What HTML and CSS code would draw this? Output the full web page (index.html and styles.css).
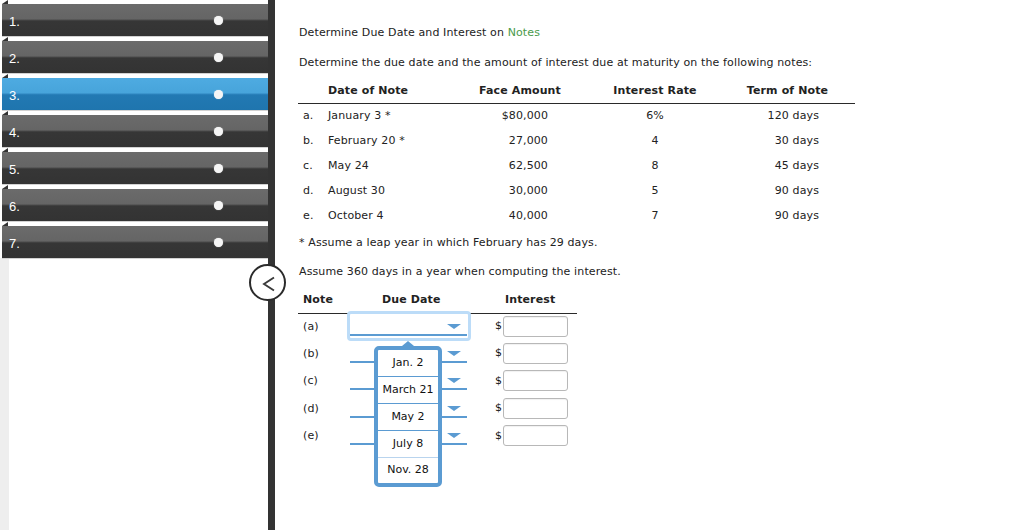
FILE: index.html
```html
<!DOCTYPE html>
<html lang="en">
<head>
<meta charset="utf-8">
<title>Determine Due Date and Interest on Notes</title>
<link rel="stylesheet" href="styles.css">
</head>
<body>
<div class="page">
  <aside class="sidebar">
    <div class="side-col">
      <ul class="steps">
        <li class="step"><span class="num">1.</span><span class="dot"></span></li>
        <li class="step"><span class="num">2.</span><span class="dot"></span></li>
        <li class="step active"><span class="num">3.</span><span class="dot"></span></li>
        <li class="step"><span class="num">4.</span><span class="dot"></span></li>
        <li class="step"><span class="num">5.</span><span class="dot"></span></li>
        <li class="step"><span class="num">6.</span><span class="dot"></span></li>
        <li class="step"><span class="num">7.</span><span class="dot"></span></li>
      </ul>
      <div class="side-fill"></div>
    </div>
    <div class="side-bar"></div>
    <button class="collapse" type="button" aria-label="Collapse">
      <svg width="14" height="16" viewBox="0 0 14 16"><polyline points="12,1.5 2,8 12,14.5" fill="none" stroke="#3a3a3a" stroke-width="1.9" stroke-linejoin="miter"/></svg>
    </button>
  </aside>

  <main class="content">
    <p class="title">Determine Due Date and Interest on <a class="link">Notes</a></p>
    <p class="intro">Determine the due date and the amount of interest due at maturity on the following notes:</p>

    <table class="notes">
      <colgroup>
        <col class="c-letter"><col class="c-date"><col class="c-face"><col class="c-rate"><col class="c-term">
      </colgroup>
      <thead>
        <tr>
          <th></th>
          <th class="h-date">Date of Note</th>
          <th>Face Amount</th>
          <th>Interest Rate</th>
          <th>Term of Note</th>
        </tr>
      </thead>
      <tbody>
        <tr><td class="letter">a.</td><td class="date">January 3 *</td><td class="face">$80,000</td><td class="rate">6%</td><td class="term">120 days</td></tr>
        <tr><td class="letter">b.</td><td class="date">February 20 *</td><td class="face">27,000</td><td class="rate">4</td><td class="term">30 days</td></tr>
        <tr><td class="letter">c.</td><td class="date">May 24</td><td class="face">62,500</td><td class="rate">8</td><td class="term">45 days</td></tr>
        <tr><td class="letter">d.</td><td class="date">August 30</td><td class="face">30,000</td><td class="rate">5</td><td class="term">90 days</td></tr>
        <tr><td class="letter">e.</td><td class="date">October 4</td><td class="face">40,000</td><td class="rate">7</td><td class="term">90 days</td></tr>
      </tbody>
    </table>

    <p class="footnote">* Assume a leap year in which February has 29 days.</p>
    <p class="assume">Assume 360 days in a year when computing the interest.</p>

    <table class="answers">
      <colgroup>
        <col class="a-note"><col class="a-due"><col class="a-int">
      </colgroup>
      <thead>
        <tr>
          <th class="h-note">Note</th>
          <th class="h-due">Due Date</th>
          <th class="h-int">Interest</th>
        </tr>
      </thead>
      <tbody>
        <tr>
          <td class="note">(a)</td>
          <td>
            <div class="select focus">
              <span class="caret-down"></span>
              <div class="popup">
                <div class="opt">Jan. 2</div>
                <div class="opt">March 21</div>
                <div class="opt">May 2</div>
                <div class="opt soft">July 8</div>
                <div class="opt">Nov. 28</div>
              </div>
            </div>
          </td>
          <td><div class="amt"><span class="cur">$</span><input class="box" type="text"></div></td>
        </tr>
        <tr>
          <td class="note">(b)</td>
          <td><div class="select"><span class="caret-down"></span></div></td>
          <td><div class="amt"><span class="cur">$</span><input class="box" type="text"></div></td>
        </tr>
        <tr>
          <td class="note">(c)</td>
          <td><div class="select"><span class="caret-down"></span></div></td>
          <td><div class="amt"><span class="cur">$</span><input class="box" type="text"></div></td>
        </tr>
        <tr>
          <td class="note">(d)</td>
          <td><div class="select"><span class="caret-down"></span></div></td>
          <td><div class="amt"><span class="cur">$</span><input class="box" type="text"></div></td>
        </tr>
        <tr>
          <td class="note">(e)</td>
          <td><div class="select"><span class="caret-down"></span></div></td>
          <td><div class="amt"><span class="cur">$</span><input class="box" type="text"></div></td>
        </tr>
      </tbody>
    </table>
  </main>
</div>
</body>
</html>
```

FILE: styles.css
```css
* { box-sizing: border-box; }

html, body {
  margin: 0;
  padding: 0;
  background: #fff;
}

body {
  font-family: "DejaVu Sans", Verdana, sans-serif;
  font-size: 11px;
  line-height: 14px;
  letter-spacing: 0.12px;
  color: #222;
}

.page {
  display: flex;
  height: 530px;
  overflow: hidden;
}

/* ---------- sidebar ---------- */
.sidebar {
  position: relative;
  display: flex;
  flex: none;
  width: 275px;
}

.side-col {
  width: 268px;
  display: flex;
  flex-direction: column;
}

.steps {
  list-style: none;
  margin: 0;
  padding: 4px 0 0 0;
  display: flex;
  flex-direction: column;
  gap: 5px;
}

.step {
  position: relative;
  height: 32px;
  margin-left: 2px;
  display: flex;
  align-items: center;
  padding-left: 7px;
  color: #fff;
  font-family: "Liberation Sans", Arial, sans-serif;
  font-size: 13px;
  line-height: 15px;
  letter-spacing: 0;
  background: linear-gradient(#6b6b6b 0, #656565 15px, #4a4a4a 16px, #363636 17px, #333 32px);
  box-shadow: 0 1px 0 #d2d2d2;
}

.step::before {
  content: "";
  position: absolute;
  left: 0;
  top: -4px;
  width: 0;
  height: 0;
  border-left: 6px solid transparent;
  border-bottom: 4px solid #333;
}

.step.active {
  background: linear-gradient(#4eabe1 0, #47a4db 15px, #2f86c0 16px, #2279b3 17px, #1f75ae 32px);
}

.num {
  padding-top: 3px;
}

.dot {
  margin-left: auto;
  margin-right: 45px;
  width: 9px;
  height: 9px;
  border-radius: 50%;
  background: #f5f5f5;
  box-shadow: 0 0 1px rgba(255, 255, 255, 0.8);
}

.side-fill {
  flex: 1;
  border-left: 9px solid #eeeeee;
}

.side-bar {
  width: 7px;
  background: #333;
}

.collapse {
  position: absolute;
  left: 249px;
  top: 264px;
  width: 37px;
  height: 37px;
  padding: 0;
  border: 2px solid #2b2b2b;
  border-radius: 50%;
  background: #fff;
  display: flex;
  align-items: center;
  justify-content: center;
}

.collapse svg {
  display: block;
  margin-left: 2px;
  margin-top: 2px;
}

/* ---------- content ---------- */
.content {
  flex: 1;
  padding: 26px 0 0 24px;
}

.content p {
  margin: 0;
}

.intro { margin-top: 16px !important; }
.footnote { margin-top: 8px !important; }
.assume { margin-top: 15px !important; }

.link {
  color: #4a9a4a;
  text-decoration: none;
}

table {
  border-collapse: collapse;
  table-layout: fixed;
}

th, td {
  padding: 0;
  font-weight: normal;
}

th {
  font-weight: bold;
  border-bottom: 1px solid #2a2a2a;
}

/* notes table */
.notes {
  width: 557px;
  margin: 9px 0 0 -1px;
}

.c-letter { width: 27px; }
.c-date { width: 125px; }
.c-face { width: 140px; }
.c-rate { width: 130px; }
.c-term { width: 135px; }

.notes th {
  height: 24px;
  text-align: center;
  vertical-align: middle;
}

.notes th.h-date {
  text-align: left;
  padding-left: 3px;
}

.notes td {
  height: 25px;
  vertical-align: middle;
}

.letter { padding-left: 5px !important; }
.date { padding-left: 3px !important; }
.face { text-align: right; padding-right: 42px !important; }
.rate { text-align: center; }
.term { text-align: right; padding-right: 36px !important; }

/* answers table */
.answers {
  width: 279px;
  margin: 9px 0 0 -1px;
}

.a-note { width: 49px; }
.a-due { width: 125px; }
.a-int { width: 105px; }

.answers th {
  height: 25px;
  vertical-align: middle;
  text-align: left;
}

.h-note { padding-left: 5px !important; }
.h-due { padding-left: 35px !important; }
.h-int { padding-left: 33px !important; }

.answers td {
  height: 27.5px;
  vertical-align: top;
}

.note {
  padding: 6px 0 0 5px !important;
}

.select {
  position: relative;
  margin-left: 3px;
  width: 117px;
  height: 22px;
  border-bottom: 2px solid #5b9bd2;
  display: flex;
  justify-content: flex-end;
  align-items: flex-start;
  padding: 10px 6px 0 0;
}

.select.focus::after {
  content: "";
  position: absolute;
  top: -3px;
  left: -3px;
  right: -4px;
  bottom: -7px;
  border: 3px solid #bcdcf8;
  border-radius: 4px;
}

.caret-down {
  width: 0;
  height: 0;
  border-left: 7px solid transparent;
  border-right: 7px solid transparent;
  border-top: 5px solid #5b9bd2;
}

.popup {
  position: absolute;
  left: 24px;
  top: 32px;
  width: 68px;
  border: 4px solid #5b9bd2;
  border-radius: 5px;
  background: #fff;
  z-index: 5;
}

.popup::before {
  content: "";
  position: absolute;
  top: -9px;
  left: 50%;
  margin-left: -6px;
  width: 0;
  height: 0;
  border-left: 6px solid transparent;
  border-right: 6px solid transparent;
  border-bottom: 5px solid #5b9bd2;
}

.opt {
  height: 27px;
  border-bottom: 1px solid #5b9bd2;
  display: flex;
  align-items: center;
  justify-content: center;
  color: #111;
  white-space: nowrap;
  letter-spacing: 0;
}

.opt.soft {
  border-bottom-color: #b9d4ee;
}

.opt:last-child {
  height: 25px;
  border-bottom: 0;
}

.amt {
  display: flex;
  align-items: center;
  padding: 2px 0 0 23px;
}

.cur {
  width: 7px;
  color: #111;
}

.box {
  margin: 0 0 0 1px;
  width: 65px;
  height: 21px;
  padding: 0 3px;
  border: 1px solid #b8b8b8;
  border-radius: 3px;
  background: #fff;
  font: inherit;
  box-shadow: inset 0 1px 1px rgba(0, 0, 0, 0.06);
}
```
